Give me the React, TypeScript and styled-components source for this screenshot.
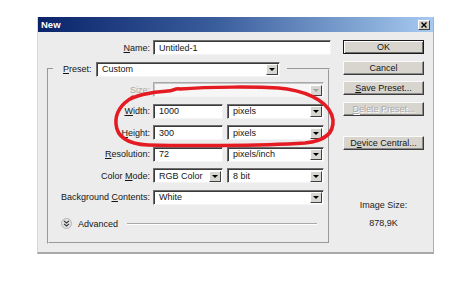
import styled, { createGlobalStyle } from 'styled-components';

const GlobalStyle = createGlobalStyle`
  html, body {
    margin: 0;
    padding: 0;
    background: #fff;
  }
  body {
    font-family: "Liberation Sans", Arial, sans-serif;
    font-size: 9px;
    color: #151515;
  }
`;

const Page = styled.div`
  position: relative;
  width: 474px;
  height: 292px;
  padding: 17px 0 0 37px;
  box-sizing: border-box;
`;

const Dialog = styled.div`
  width: 397px;
  height: 237px;
  box-sizing: border-box;
  background: #ececec;
  border-left: 1px solid #d8d8d8;
  border-right: 1px solid #b0b0b0;
  border-bottom: 2px solid #a8a8a8;
  display: flex;
  flex-direction: column;
`;

const TitleBar = styled.div`
  height: 15px;
  flex: none;
  display: flex;
  align-items: center;
  justify-content: space-between;
  padding: 0 3px 0 3px;
  background: linear-gradient(to right, #0a246a 0%, #3a5d9c 45%, #a6caf0 100%);
`;

const Title = styled.span`
  color: #fff;
  font-weight: bold;
  font-size: 9.5px;
`;

const CloseButton = styled.div`
  width: 12px;
  height: 10px;
  box-sizing: border-box;
  background: #d4d0c8;
  border: 1px solid;
  border-color: #fff #404040 #404040 #fff;
  display: flex;
  align-items: center;
  justify-content: center;
`;

const Body = styled.div`
  flex: 1;
  display: flex;
  padding: 8px 9px 0 9px;
`;

const LeftColumn = styled.div`
  width: 284px;
  display: flex;
  flex-direction: column;
`;

const RightColumn = styled.div`
  width: 81px;
  margin-left: 12px;
  display: flex;
  flex-direction: column;
`;

const Row = styled.div<{ $labelWidth: number }>`
  display: grid;
  grid-template-columns: ${({ $labelWidth }) => $labelWidth}px 1fr;
  column-gap: 3px;
  align-items: center;
  height: 15px;
`;

const Label = styled.span<{ $disabled?: boolean }>`
  text-align: right;
  white-space: nowrap;
  color: ${({ $disabled }) => ($disabled ? '#a8a8a8' : '#151515')};
`;

const Controls = styled.div`
  display: flex;
  gap: 4px;
  height: 15px;
`;

const TextInput = styled.div<{ $width?: number }>`
  ${({ $width }) => ($width ? `width: ${$width}px;` : 'flex: 1;')}
  height: 15px;
  box-sizing: border-box;
  background: #fff;
  border: 1px solid;
  border-color: #6e6e6e #f4f4f4 #f4f4f4 #6e6e6e;
  box-shadow: inset 1px 1px 0 #3a3a3a;
  padding: 0 0 0 5px;
  display: flex;
  align-items: center;
`;

const SelectBox = styled.div<{ $width?: number; $disabled?: boolean }>`
  ${({ $width }) => ($width ? `width: ${$width}px; flex: none;` : 'flex: 1;')}
  height: 15px;
  box-sizing: border-box;
  background: ${({ $disabled }) => ($disabled ? '#f6f6f6' : '#fff')};
  border: 1px solid;
  border-color: ${({ $disabled }) =>
    $disabled ? '#a8a8a8 #f4f4f4 #f4f4f4 #a8a8a8' : '#6e6e6e #f4f4f4 #f4f4f4 #6e6e6e'};
  box-shadow: inset 1px 1px 0 ${({ $disabled }) => ($disabled ? '#c8c8c8' : '#3a3a3a')};
  display: flex;
  align-items: center;
  padding: 0 1px 0 5px;
`;

const SelectValue = styled.span`
  flex: 1;
  white-space: nowrap;
`;

const ArrowButton = styled.div<{ $disabled?: boolean }>`
  width: 12px;
  height: 11px;
  margin-top: 1px;
  box-sizing: border-box;
  background: #d8d6d0;
  border: 1px solid;
  border-color: #fff #404040 #404040 #fff;
  display: flex;
  align-items: center;
  justify-content: center;
  &::after {
    content: '';
    border-left: 3px solid transparent;
    border-right: 3px solid transparent;
    border-top: 3px solid ${({ $disabled }) => ($disabled ? '#a0a0a0' : '#000')};
  }
`;

const GroupBox = styled.fieldset`
  margin: 7px 0 0 0;
  width: 283px;
  height: 182px;
  box-sizing: border-box;
  padding: 6px 4px 11px 0;
  border: 2px groove #ececec;
  display: flex;
  flex-direction: column;
`;

const Legend = styled.legend`
  margin-left: 4px;
  padding: 0 7px 0 10px;
  display: flex;
  align-items: center;
  gap: 4px;
  height: 14px;
`;

const LegendLabel = styled.span`
  width: 29px;
  white-space: nowrap;
`;

const Rows = styled.div`
  display: flex;
  flex-direction: column;
  gap: 6.6px;
`;

const AdvancedRow = styled.div`
  display: flex;
  align-items: center;
  gap: 6px;
  margin: 12px 7px 0 12px;
  height: 14px;
`;

const AdvancedIcon = styled.div`
  width: 11px;
  height: 11px;
  box-sizing: border-box;
  border-radius: 50%;
  background: #e2e2e2;
  border: 1px solid #b4b4b4;
  display: flex;
  align-items: center;
  justify-content: center;
`;

const Rule = styled.div`
  flex: 1;
  height: 1px;
  background: #a8a8a8;
  box-shadow: 0 1px 0 #fff;
  margin-left: 3px;
`;

const Button = styled.div<{ $default?: boolean; $disabled?: boolean }>`
  height: 14px;
  box-sizing: border-box;
  background: #d8d5cf;
  border: 1px solid;
  border-color: ${({ $default }) =>
    $default ? '#1a1a1a' : '#fafafa #3c3c3c #3c3c3c #fafafa'};
  box-shadow: ${({ $default }) =>
    $default ? 'inset 1px 1px 0 #fff, inset -1px -1px 0 #707070' : 'inset -1px -1px 0 #8a8a8a'};
  display: flex;
  align-items: center;
  justify-content: center;
  white-space: nowrap;
  color: ${({ $disabled }) => ($disabled ? '#a8a8a8' : '#151515')};
  text-shadow: ${({ $disabled }) => ($disabled ? '1px 1px 0 #fff' : 'none')};
`;

const ButtonStack = styled.div`
  display: flex;
  flex-direction: column;
  gap: 6.6px;
`;

const DeviceButton = styled(Button)`
  margin-top: 20px;
`;

const SizeInfo = styled.div`
  margin-top: 46px;
  text-align: center;
  line-height: 18px;
  color: #222;
`;

const Annotation = styled.svg`
  position: absolute;
  left: 0;
  top: 0;
  pointer-events: none;
`;

function Select({ value, width, disabled }: { value?: string; width?: number; disabled?: boolean }) {
  return (
    <SelectBox $width={width} $disabled={disabled}>
      <SelectValue>{value}</SelectValue>
      <ArrowButton $disabled={disabled} />
    </SelectBox>
  );
}

const LABEL = 101;

export default function App() {
  return (
    <>
      <GlobalStyle />
      <Page>
        <Dialog>
          <TitleBar>
            <Title>New</Title>
            <CloseButton>
              <svg width="6" height="6" viewBox="0 0 6 6">
                <path d="M0.5 0.5 L5.5 5.5 M5.5 0.5 L0.5 5.5" stroke="#000" strokeWidth="1.4" />
              </svg>
            </CloseButton>
          </TitleBar>
          <Body>
            <LeftColumn>
              <Row $labelWidth={103}>
                <Label><u>N</u>ame:</Label>
                <TextInput>Untitled-1</TextInput>
              </Row>
              <GroupBox>
                <Legend>
                  <LegendLabel><u>P</u>reset:</LegendLabel>
                  <Select value="Custom" width={184} />
                </Legend>
                <Rows>
                  <Row $labelWidth={LABEL}>
                    <Label $disabled>Size:</Label>
                    <Controls>
                      <Select disabled />
                    </Controls>
                  </Row>
                  <Row $labelWidth={LABEL}>
                    <Label><u>W</u>idth:</Label>
                    <Controls>
                      <TextInput $width={70}>1000</TextInput>
                      <Select value="pixels" />
                    </Controls>
                  </Row>
                  <Row $labelWidth={LABEL}>
                    <Label><u>H</u>eight:</Label>
                    <Controls>
                      <TextInput $width={70}>300</TextInput>
                      <Select value="pixels" />
                    </Controls>
                  </Row>
                  <Row $labelWidth={LABEL}>
                    <Label><u>R</u>esolution:</Label>
                    <Controls>
                      <TextInput $width={70}>72</TextInput>
                      <Select value="pixels/inch" />
                    </Controls>
                  </Row>
                  <Row $labelWidth={LABEL}>
                    <Label>Color <u>M</u>ode:</Label>
                    <Controls>
                      <Select value="RGB Color" width={70} />
                      <Select value="8 bit" />
                    </Controls>
                  </Row>
                  <Row $labelWidth={LABEL}>
                    <Label>Background <u>C</u>ontents:</Label>
                    <Controls>
                      <Select value="White" />
                    </Controls>
                  </Row>
                </Rows>
                <AdvancedRow>
                  <AdvancedIcon>
                    <svg width="7" height="7" viewBox="0 0 7 7">
                      <path d="M1 0.8 L3.5 3 L6 0.8 M1 3.8 L3.5 6 L6 3.8" stroke="#333" strokeWidth="1.1" fill="none" />
                    </svg>
                  </AdvancedIcon>
                  <span>Advanced</span>
                  <Rule />
                </AdvancedRow>
              </GroupBox>
            </LeftColumn>
            <RightColumn>
              <ButtonStack>
                <Button $default>OK</Button>
                <Button>Cancel</Button>
                <Button><u>S</u>ave Preset...</Button>
                <Button $disabled><u>D</u>elete Preset...</Button>
              </ButtonStack>
              <DeviceButton>D<u>e</u>vice Central...</DeviceButton>
              <SizeInfo>
                Image Size:
                <br />
                878,9K
              </SizeInfo>
            </RightColumn>
          </Body>
        </Dialog>
        <Annotation width="474" height="292" viewBox="0 0 474 292">
          <path
            d="M127 101 C133 96 150 92 168 91 C173 91 175 88 180 89 C205 87 262 86 287 89 C312 93 331 104 333 120 C334 134 324 141 305 143 C260 146 180 146 148 145 C128 144 117 137 116 124 C115 112 121 104 133 97"
            fill="none"
            stroke="#e41b22"
            strokeWidth="3.5"
            strokeLinecap="round"
            strokeLinejoin="round"
          />
        </Annotation>
      </Page>
    </>
  );
}
